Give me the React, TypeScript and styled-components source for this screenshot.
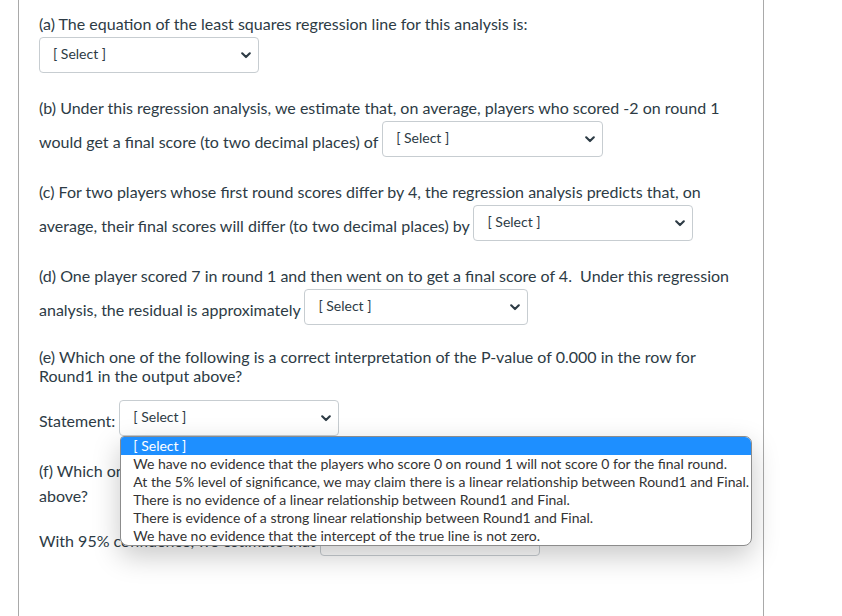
import React from 'react';
import styled, { createGlobalStyle } from 'styled-components';

const GlobalStyle = createGlobalStyle`
  html, body {
    margin: 0;
    padding: 0;
    background: #fff;
  }
  body {
    font-family: Lato, "Noto Sans", sans-serif;
    color: #2d3b45;
    overflow: hidden;
  }
`;

const Page = styled.div`
  width: 842px;
  height: 616px;
  overflow: hidden;
  background: #fff;
`;

const Panel = styled.div`
  box-sizing: border-box;
  margin-left: 18px;
  width: 746px;
  height: 616px;
  padding: 14px 20px 0;
  border-left: 1px solid #a9a9a9;
  border-right: 1px solid #a9a9a9;
`;

const Question = styled.p<{ $after?: number; $lineHeight?: string }>`
  margin: 0 0 ${p => p.$after ?? 11}px;
  font-size: 16px;
  line-height: ${p => p.$lineHeight ?? 'normal'};
  white-space: nowrap;
`;

const SelectBox = styled.span<{ $width: number }>`
  position: relative;
  display: inline-flex;
  align-items: center;
  justify-content: space-between;
  box-sizing: border-box;
  width: ${p => p.$width}px;
  height: 36px;
  margin: 4px 0 14px;
  padding: 0 7px 2px 13px;
  vertical-align: middle;
  border: 1px solid #c7cdd1;
  border-radius: 4px;
  background: #fff;
  font-size: 14px;
  line-height: 18px;
  color: #2d3b45;
`;

const Chevron = styled.svg`
  width: 10px;
  height: 7px;
  flex: none;
  margin-top: 2px;
`;

const OptionList = styled.ul`
  position: absolute;
  top: calc(100% + 1px);
  left: 0;
  z-index: 5;
  width: 632px;
  margin: 0;
  padding: 0;
  list-style: none;
  box-sizing: border-box;
  border: 1px solid #8c8c8c;
  border-radius: 4px 7px 8px 8px;
  background: #fff;
  overflow: hidden;
  box-shadow: 0 10px 28px rgba(0, 0, 0, 0.22);
`;

const Option = styled.li<{ $active?: boolean }>`
  height: 18px;
  padding: 0 12px;
  font-size: 14px;
  line-height: 18px;
  white-space: nowrap;
  color: ${p => (p.$active ? '#fff' : '#333')};
  background: ${p => (p.$active ? '#1e8fff' : 'transparent')};
`;

const options = [
  '[ Select ]',
  'We have no evidence that the players who score 0 on round 1 will not score 0 for the final round.',
  'At the 5% level of significance, we may claim there is a linear relationship between Round1 and Final.',
  'There is no evidence of a linear relationship between Round1 and Final.',
  'There is evidence of a strong linear relationship between Round1 and Final.',
  'We have no evidence that the intercept of the true line is not zero.',
];

type SelectProps = { width?: number; open?: boolean };

const Select: React.FC<SelectProps> = ({ width = 220, open }) => (
  <SelectBox $width={width}>
    <span>[ Select ]</span>
    <Chevron viewBox="0 0 10 7">
      <path d="M1.2 1.3 L5 5.1 L8.8 1.3" fill="none" stroke="#2d3b45" strokeWidth="2.1" strokeLinecap="round" strokeLinejoin="round" />
    </Chevron>
    {open && (
      <OptionList>
        {options.map((o, i) => (
          <Option key={i} $active={i === 0}>{o}</Option>
        ))}
      </OptionList>
    )}
  </SelectBox>
);

const App: React.FC = () => (
  <>
    <GlobalStyle />
    <Page>
      <Panel>
        <Question>
          (a) The equation of the least squares regression line for this analysis is:
          <br />
          <Select />
        </Question>
        <Question>
          (b) Under this regression analysis, we estimate that, on average, players who scored -2 on round 1
          <br />
          would get a final score (to two decimal places) of <Select width={221} />
        </Question>
        <Question>
          (c) For two players whose first round scores differ by 4, the regression analysis predicts that, on
          <br />
          average, their final scores will differ (to two decimal places) by <Select />
        </Question>
        <Question $after={8}>
          (d) One player scored 7 in round 1 and then went on to get a final score of 4.&nbsp; Under this regression
          <br />
          analysis, the residual is approximately <Select width={224} />
        </Question>
        <Question>
          (e) Which one of the following is a correct interpretation of the P-value of 0.000 in the row for
          <br />
          Round1 in the output above?
        </Question>
        <Question $after={8}>
          Statement: <Select open />
        </Question>
        <Question $lineHeight="25px" $after={8}>
          (f) Which one of the following is the correct interpretation of the estimated slope in the output
          <br />
          above?
        </Question>
        <Question>
          With 95% confidence, we estimate that <Select />
        </Question>
      </Panel>
    </Page>
  </>
);

export default App;
